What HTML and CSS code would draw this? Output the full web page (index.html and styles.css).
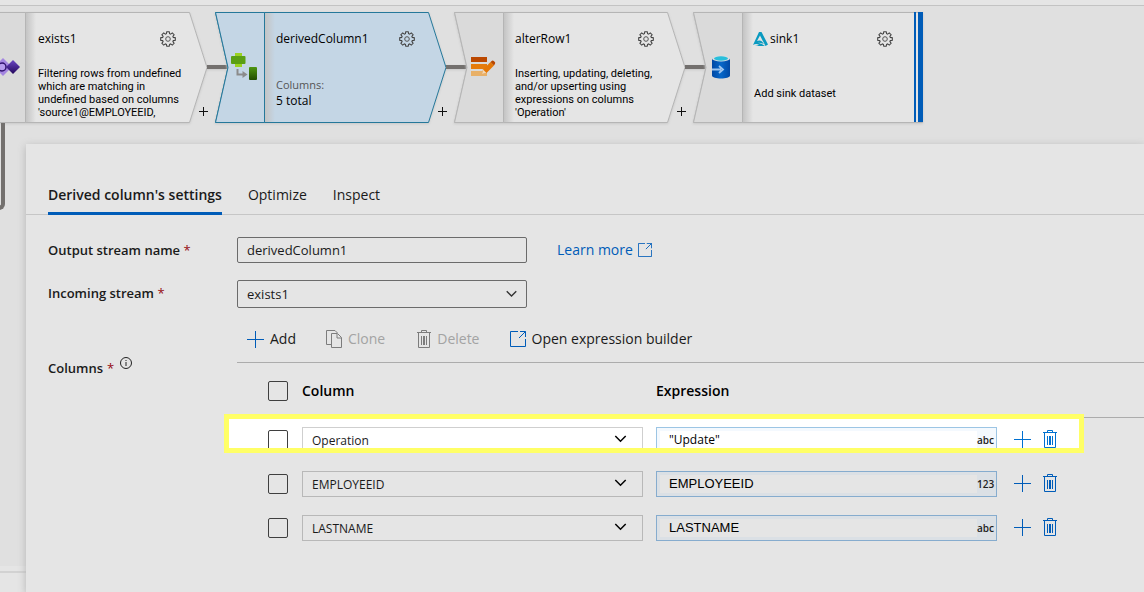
FILE: index.html
```html
<!DOCTYPE html>
<html lang="en">
<head>
<meta charset="utf-8">
<title>Data flow</title>
<link rel="stylesheet" href="styles.css">
</head>
<body>
<svg class="sprite" aria-hidden="true">
  <defs>
    <linearGradient id="fade"><stop offset="0" stop-color="#c4c4c4"/><stop offset="1" stop-color="#c4c4c4" stop-opacity="0"/></linearGradient>
    <linearGradient id="violet" x2="0" y2="1"><stop offset="0" stop-color="#6a45c4"/><stop offset="1" stop-color="#24085c"/></linearGradient>
    <linearGradient id="moss" x2="0" y2="1"><stop offset="0" stop-color="#4f9611"/><stop offset="1" stop-color="#214c00"/></linearGradient>
    <linearGradient id="ocean"><stop offset="0" stop-color="#0048a4"/><stop offset=".5" stop-color="#0667c9"/><stop offset="1" stop-color="#0048a4"/></linearGradient>
  </defs>
  <symbol id="gear" viewBox="0 0 16 16"><path d="M6.8.7h2.4l.4 2 1 .4 1.700-1.200 1.800 1.800-1.200 1.700.4 1 2 .4v2.400l-2 .4-.4 1 1.200 1.700-1.800 1.800-1.700-1.200-1 .4-.4 2H6.800l-.4-2-1-.4-1.700 1.200-1.800-1.800 1.200-1.700-.4-1-2-.4V6.800l2-.4.4-1-1.200-1.700 1.800-1.800 1.700 1.200 1-.4z" fill="none" stroke="#444" stroke-width="1.1"/><circle cx="8" cy="8" r="2.3" fill="none" stroke="#555"/></symbol>
  <symbol id="card" viewBox="0 0 232 112" overflow="visible"><path class="card-fill" d="M.5.5H213.500L231 55.500 213.500 110.500H.5L13 55.500z"/><path class="card-side" d="M.5.5H49.500V110.500H.5L13 55.500z"/><path d="M50 1h10v109H50z" fill="url(#fade)"/><path d="M231 55h21" stroke="#73706e" stroke-width="4"/></symbol>
  <symbol id="plus" viewBox="0 0 18 18"><path d="M9.500 1v17M1 9.500h17" fill="none" stroke="currentColor"/></symbol>
  <symbol id="trash" viewBox="0 0 14 18"><path d="M0 2.500h14M4.500 2V.5h5V2M1.500 3v14.500h11V3M4.500 6v9M9.500 6v9" fill="none" stroke="currentColor"/><path d="M7 6v9" stroke="currentColor" stroke-width="2"/></symbol>
  <symbol id="open" viewBox="0 0 16 16"><path d="M8 .5H.5v15h15V8M10 .5h5.500V6M15.500.5L9 7" fill="none" stroke="currentColor"/></symbol>
  <symbol id="chevron" viewBox="0 0 12 8"><path d="M.8 1L6 6.200 11.200 1" fill="none" stroke="currentColor" stroke-width="1.500"/></symbol>
</svg>

<div class="page">
  <div class="topbar"></div>
  <section class="flow" aria-label="Flow diagram">
    <article class="node">
      <svg class="shape"><use href="#card"/></svg>
      <div class="kind"><svg width="40" height="24" viewBox="0 0 40 24"><path d="M14 12l9-9 9 9-9 9z" fill="#a486e0"/><circle cx="22" cy="12" r="4" fill="#b69ced" stroke="#30126e" stroke-width="1.500"/><path d="M26 12l7-7 7 7-7 7z" fill="url(#violet)"/></svg></div>
      <div class="info">
        <header><h2>exists1</h2><button class="gear" aria-label="Settings for exists1"><svg><use href="#gear"/></svg></button></header>
        <p class="about">Filtering rows from undefined which are matching in<br>undefined based on columns 'source1@EMPLOYEEID,</p>
      </div>
      <button class="next" aria-label="Add step after exists1"><svg viewBox="0 0 10 10"><path d="M5.500 1v9M1 5.500h9" stroke="#111"/></svg></button>
    </article>
    <article class="node active">
      <svg class="shape"><use href="#card"/></svg>
      <div class="kind"><svg width="26" height="28" viewBox="0 0 26 28"><path d="M4 0h7v14H4z" fill="#9ad221"/><rect y="3" width="14.500" height="8" rx="1" fill="#5a9f14"/><path d="M6.500 16v5.500h6" fill="none" stroke="#8b8b8b" stroke-width="2"/><path d="M11.500 18l5 3.500-5 3.500z" fill="#8b8b8b"/><rect x="18" y="14" width="8" height="13" rx="1" fill="url(#moss)"/></svg></div>
      <div class="info">
        <header><h2>derivedColumn1</h2><button class="gear" aria-label="Settings for derivedColumn1"><svg><use href="#gear"/></svg></button></header>
        <dl class="stat"><dt>Columns:</dt><dd>5 total</dd></dl>
      </div>
      <button class="next" aria-label="Add step after derivedColumn1"><svg viewBox="0 0 10 10"><path d="M5.500 1v9M1 5.500h9" stroke="#111"/></svg></button>
    </article>
    <article class="node">
      <svg class="shape"><use href="#card"/></svg>
      <div class="kind"><svg width="26" height="20" viewBox="0 0 26 20"><path d="M1 0h16v5H1z" fill="#bb4800"/><path d="M1 7h16v5H1z" fill="#e57b0c"/><path d="M1 14h16v5H1z" fill="#e8b067"/><path d="M13 12.500L20.500 5l3.500 3.500-7.500 7.500-4.500 1z" fill="#e47706"/><path d="M13 12.500l3.500 3.500-4.500 1z" fill="#f2d9b8"/><path d="M20.500 5l1.500-1.200q1-.5 1.800.3l1 1q.8.8.2 1.700L24 8.500z" fill="#b94700"/></svg></div>
      <div class="info">
        <header><h2>alterRow1</h2><button class="gear" aria-label="Settings for alterRow1"><svg><use href="#gear"/></svg></button></header>
        <p class="about">Inserting, updating, deleting,<br>and/or upserting using<br>expressions on columns 'Operation'</p>
      </div>
      <button class="next" aria-label="Add step after alterRow1"><svg viewBox="0 0 10 10"><path d="M5.500 1v9M1 5.500h9" stroke="#111"/></svg></button>
    </article>
    <article class="node sink">
      <svg class="shape" viewBox="0 0 232 112"><path class="card-fill" d="M.5.5H229.500V110.500H.5L13 55.500z"/><path class="card-side" d="M.5.5H49.500V110.500H.5L13 55.500z"/><path d="M50 1h10v109H50z" fill="url(#fade)"/><path d="M221 0h2v110h-2zM225 0h5v110h-5z" fill="#005cb8"/></svg>
      <div class="kind"><svg width="20" height="24" viewBox="0 0 20 24"><path d="M1 3.500v17c0 4 18 4 18 0v-17z" fill="url(#ocean)"/><ellipse cx="10" cy="3.500" rx="9" ry="3" fill="#d8dde0"/><ellipse cx="10" cy="3.500" rx="7" ry="2.200" fill="#29bfdb"/><path d="M1 14.500h9M8 11l4 3.500L8 18" fill="none" stroke="#9dc5ef" stroke-width="1.800"/></svg></div>
      <div class="info">
        <header><svg class="logo" viewBox="0 0 16 16"><path d="M7 1h2.500L16 13.500 13.500 15 8 4.500 5 10q3-1 5 .5l2 2.500q-4-1.500-6-1.200L10 13q1 1 3 2H3q3-.5 4-1.200Q4 12 1 14z" fill="#0a9ac0"/></svg><h2>sink1</h2><button class="gear" aria-label="Settings for sink1"><svg><use href="#gear"/></svg></button></header>
        <p class="hint">Add sink dataset</p>
      </div>
    </article>
    <div class="edge"></div>
  </section>

  <div class="lower">
    <div class="gutter"><div class="gutter-bar"></div></div>
    <main class="panel">
      <div class="tabs" role="tablist">
        <button class="tab selected" role="tab" aria-selected="true">Derived column's settings</button>
        <button class="tab" role="tab">Optimize</button>
        <button class="tab" role="tab">Inspect</button>
      </div>
      <form class="form">
        <label class="label" for="out">Output stream name <b>*</b></label>
        <div class="line">
          <input class="field" id="out" value="derivedColumn1">
          <a class="learn" href="#">Learn more <svg><use href="#open"/></svg></a>
        </div>
        <label class="label" for="in">Incoming stream <b>*</b></label>
        <div class="line">
          <span class="pick"><select class="field tall" id="in"><option>exists1</option></select><svg><use href="#chevron"/></svg></span>
        </div>
        <div class="label columns-label">Columns <b>*</b> <svg class="hintmark" viewBox="0 0 12 12"><circle cx="6" cy="6" r="5.500" fill="none" stroke="#222"/><path d="M6 5v4M6 3v1" stroke="#222"/></svg></div>
        <div class="columns">
          <div class="actions">
            <button type="button" class="add"><svg width="18" height="18"><use href="#plus"/></svg>Add</button>
            <button type="button" class="clone" disabled><svg width="16" height="18" viewBox="0 0 16 18"><path d="M5 14.500H.5V.5H9l2.500 2.500M5.500 3.500h6l4 4v10h-10zM11 4v4h4.500" fill="none" stroke="currentColor"/></svg>Clone</button>
            <button type="button" class="delete" disabled><svg width="14" height="18"><use href="#trash"/></svg>Delete</button>
            <button type="button" class="build"><svg width="16" height="16"><use href="#open"/></svg>Open expression builder</button>
          </div>
          <table class="grid">
            <thead><tr><th><input type="checkbox" aria-label="Select all"></th><th>Column</th><th>Expression</th></tr></thead>
            <tbody>
              <tr class="marked">
                <td><input type="checkbox" aria-label="Select Operation"></td>
                <td><span class="pick"><select aria-label="Column"><option>Operation</option></select><svg><use href="#chevron"/></svg></span></td>
                <td><span class="expr"><input type="text" aria-label="Expression" value="&quot;Update&quot;"><span>abc</span></span></td>
                <td class="tools"><button type="button" aria-label="Add"><svg width="18" height="18"><use href="#plus"/></svg></button><button type="button" aria-label="Delete"><svg width="14" height="18"><use href="#trash"/></svg></button></td>
              </tr>
              <tr>
                <td><input type="checkbox" aria-label="Select EMPLOYEEID"></td>
                <td><span class="pick"><select aria-label="Column"><option>EMPLOYEEID</option></select><svg><use href="#chevron"/></svg></span></td>
                <td><span class="expr plain"><input type="text" aria-label="Expression" value="EMPLOYEEID"><span>123</span></span></td>
                <td class="tools"><button type="button" aria-label="Add"><svg width="18" height="18"><use href="#plus"/></svg></button><button type="button" aria-label="Delete"><svg width="14" height="18"><use href="#trash"/></svg></button></td>
              </tr>
              <tr>
                <td><input type="checkbox" aria-label="Select LASTNAME"></td>
                <td><span class="pick"><select aria-label="Column"><option>LASTNAME</option></select><svg><use href="#chevron"/></svg></span></td>
                <td><span class="expr plain"><input type="text" aria-label="Expression" value="LASTNAME"><span>abc</span></span></td>
                <td class="tools"><button type="button" aria-label="Add"><svg width="18" height="18"><use href="#plus"/></svg></button><button type="button" aria-label="Delete"><svg width="14" height="18"><use href="#trash"/></svg></button></td>
              </tr>
            </tbody>
          </table>
        </div>
      </form>
    </main>
  </div>
</div>
</body>
</html>
```
FILE: styles.css
```css
* { box-sizing: border-box; }
body { margin: 0; background: #e0e0e0; color: #1a1a1a; font: 14px/20px "Open Sans", "Noto Sans", sans-serif; overflow-x: hidden; }
button, input, select { font: inherit; color: inherit; margin: 0; }
button { padding: 0; border: 0; background: none; }
svg { display: block; flex: none; }
.sprite { position: absolute; width: 0; height: 0; }
.page { min-height: 100vh; display: flex; flex-direction: column; overflow: hidden; }
.topbar { height: 6px; background: #e5e5e5; border-bottom: 1px solid #c3c3c3; }

/* Flow diagram */
.flow { position: relative; display: flex; height: 138px; padding-top: 6px; margin-left: -24px; }
.node { position: relative; flex: none; display: grid; grid-template-columns: 49px 1fr; width: 239px; height: 110px; color: #000; }
.shape { position: absolute; left: 0; top: 0; width: 232px; height: 112px; overflow: visible; fill: #e5e5e5; stroke: none; filter: drop-shadow(0 1px 1px #c8c8c8); }
.card-fill { fill: var(--face, #e5e5e5); stroke: var(--rim, #b5b5b5); }
.card-side { fill: var(--side, #dadada); stroke: var(--rim, #b5b5b5); }
.active { --face: #c4d6e5; --side: #c4d6e5; --rim: #25789a; }
.kind { position: relative; display: flex; align-items: center; justify-content: flex-end; padding-right: 7px; }
.node:first-child .kind { padding-right: 5px; }
.sink .kind { padding-right: 11px; }
.info { position: relative; padding: 17px 0 0 12px; overflow: hidden; }
.node:first-child .info { padding-left: 13px; }
.info header { display: flex; align-items: center; height: 20px; padding-right: 39px; }
.info h2 { flex: 1; margin: 0; font-size: 12px; font-weight: 400; }
.gear svg { width: 16px; height: 16px; }
.logo { width: 16px; height: 16px; margin: 0 2px 0 -2px; }
.about { margin: 18px 0 0; width: 150px; font: 11px/13px Roboto, "Open Sans", sans-serif; }
.stat { margin: 28px 0 0; font-size: 12px; line-height: 16px; }
.stat dt { font-size: 11px; color: #555; }
.stat dd { margin: 0; }
.hint { margin: 37px 0 0; font: 11px/16px Roboto, "Open Sans", sans-serif; }
.next { position: absolute; right: 7px; bottom: 6px; }
.next svg { width: 10px; height: 10px; }
.edge { position: absolute; left: 14px; top: 117px; width: 15px; height: 87px; border: solid #73706e; border-width: 0 4px 4px 0; border-radius: 0 0 6px 0; }

/* Lower area */
.lower { flex: 1; display: flex; }
.gutter { flex: none; width: 26px; display: flex; flex-direction: column; justify-content: flex-end; }
.gutter-bar { height: 26px; background: linear-gradient(#e5e5e5 5px, #d2d2d2 5px, #d2d2d2 7px, #e5e5e5 7px); }
.panel { position: relative; flex: 1; min-width: 0; padding-top: 36px; background: #e5e5e5; box-shadow: 0 2px 8px #b4b4b4; }
.tabs { display: flex; gap: 26px; padding-left: 22px; border-bottom: 1px solid #c6c6c6; }
.tab { height: 35px; padding-bottom: 2px; margin-bottom: -1px; border-bottom: 3px solid transparent; line-height: 28px; }
.selected { font-weight: 600; border-color: #005cb8; }
.form { display: grid; grid-template-columns: 189px 1fr; row-gap: 17px; padding: 22px 0 0 22px; }
.label { font-weight: 600; font-size: 13px; line-height: 26px; }
.label b { color: #960b12; font-weight: 400; }
.line { display: flex; align-items: center; gap: 30px; }
.field { width: 290px; height: 26px; padding: 0 9px; border: 1px solid #6b6b6b; border-radius: 2px; background: transparent; font-size: 13px; }
.tall { height: 28px; }
.learn { display: flex; align-items: center; gap: 5px; color: #005cb8; text-decoration: none; }
.learn svg { width: 14px; height: 14px; }
.pick { position: relative; display: block; }
.pick select { appearance: none; outline: 0; }
.pick svg { position: absolute; right: 10px; top: 10px; width: 11px; height: 8px; color: #333; pointer-events: none; }
.columns-label { display: flex; gap: 4px; padding-top: 30px; }
.hintmark { width: 12px; height: 12px; margin: 2px 0 0 2px; }
.columns { min-width: 0; }
.actions { display: flex; height: 37px; padding: 0 0 10px 9px; }
.actions button { display: flex; align-items: center; gap: 6px; }
.actions .clone { margin-left: 30px; }
.actions .delete { margin-left: 32px; }
.actions .build { margin-left: 30px; }
.add svg, .build svg { color: #005cb8; }
.actions button:disabled { color: #a3a3a3; }
.actions button:disabled svg { color: #7c7c7c; }

/* Column mapping table */
.grid, .grid thead, .grid tbody { display: block; }
.grid { border-top: 1px solid #acacac; }
.grid tr { display: grid; grid-template-columns: 21px 1fr 1fr 48px; column-gap: 13px; padding: 18px 86px 0 31px; }
.grid th, .grid td { display: block; min-width: 0; padding: 0; text-align: left; }
.grid thead tr { padding-top: 18px; height: 55px; border-bottom: 1px solid #acacac; }
.grid th { font-weight: 600; color: #000; }
.grid input[type="checkbox"] { appearance: none; display: block; width: 20px; height: 20px; border: 1px solid #3f3f3f; border-radius: 2px; background: transparent; }
.grid td input[type="checkbox"] { margin-top: 3px; }
.grid select { display: block; width: 100%; height: 26px; padding: 1px 9px 0; border: 1px solid #b8b8b8; border-radius: 0; background: transparent; font-size: 12px; }
.grid .pick svg { right: 16px; top: 8px; width: 13px; color: #000; }
.expr { display: flex; align-items: center; height: 26px; padding: 0 2px 0 3px; border: 1px solid #86acce; background: #dbe0e5; color: #000; }
.expr input { flex: 1; min-width: 0; height: 18px; padding: 0 0 0 9px; border: 0; background: #e5e5e5; font-size: 12px; outline: 0; }
.plain input { font-family: "Liberation Sans", Arial, sans-serif; font-size: 13px; }
.expr span { width: 17px; font: 600 10px/20px "Open Sans", sans-serif; color: #222; text-align: right; white-space: nowrap; }
.tools { color: #005cb8; }
.grid .tools { display: flex; justify-content: space-between; align-items: center; height: 24px; padding: 0 1px 0 3px; }
.grid tr.marked { position: relative; height: 39px; margin: -4px 60px 0 -13px; padding: 8px 21px 0 39px; border: 5px solid #ffff66; background: #fff; overflow: hidden; }
.marked select { border-color: #cfcfcf; }
.marked .expr { border-color: #9cc5e4; background: #f4f9fe; }
.marked .expr input { background: #fff; }
.marked .tools { color: #0070d0; }
```
